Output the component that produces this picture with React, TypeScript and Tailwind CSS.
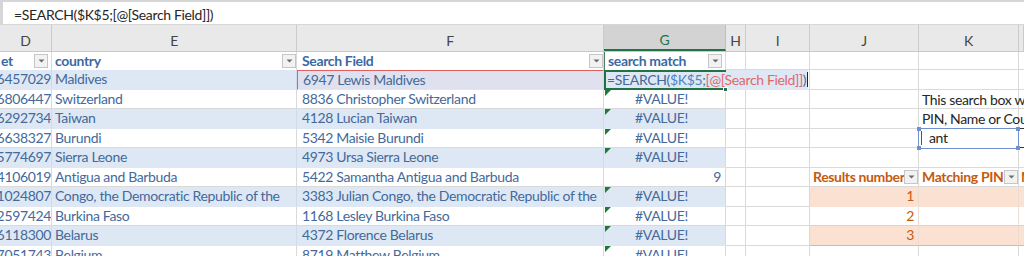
import React from "react";

type Row = { d: string; e: string; f: string; g: string };

const rows: Row[] = [
    { d: "6457029", e: "Maldives", f: "6947 Lewis Maldives", g: "edit" },
    { d: "6806447", e: "Switzerland", f: "8836 Christopher Switzerland", g: "#VALUE!" },
    { d: "6292734", e: "Taiwan", f: "4128 Lucian Taiwan", g: "#VALUE!" },
    { d: "6638327", e: "Burundi", f: "5342 Maisie Burundi", g: "#VALUE!" },
    { d: "5774697", e: "Sierra Leone", f: "4973 Ursa Sierra Leone", g: "#VALUE!" },
    { d: "4106019", e: "Antigua and Barbuda", f: "5422 Samantha Antigua and Barbuda", g: "9" },
    { d: "1024807", e: "Congo, the Democratic Republic of the", f: "3383 Julian Congo, the Democratic Republic of the", g: "#VALUE!" },
    { d: "2597424", e: "Burkina Faso", f: "1168 Lesley Burkina Faso", g: "#VALUE!" },
    { d: "6118300", e: "Belarus", f: "4372 Florence Belarus", g: "#VALUE!" },
    { d: "7051743", e: "Belgium", f: "8719 Matthew Belgium", g: "#VALUE!" },
];

const GRID = "grid grid-cols-[52px_245px_307px_122px_20px_64px_109px_100px_1fr]";

function FilterButton({ offset }: { offset: string }) {
    return (
        <span className={`absolute ${offset} top-[2px] w-[14px] h-[14px] bg-[#f2f2f2] border border-[#c6c6c6] flex items-center justify-center`}>
            <svg width="7" height="4" viewBox="0 0 7 4">
                <path d="M0.5 0.5h6L3.5 3.5z" fill="#6b6b6b" />
            </svg>
        </span>
    );
}

function ErrorMark() {
    return <span className="absolute left-[1px] top-0 w-0 h-0 border-t-[6px] border-r-[6px] border-t-[#1e7a35] border-r-transparent" />;
}

export default function App() {
    const cell = "relative h-[19.5px] border-r border-b overflow-hidden whitespace-nowrap flex items-center";

    return (
        <div className="w-[1024px] h-[256px] overflow-hidden bg-white font-['Lato',sans-serif] text-[14px] tracking-[-0.35px] leading-none">
            {/* formula bar */}
            <div className="h-[25px] bg-[#d6d6d6] pt-[2px] pl-[3px] pb-px">
                <div className="h-[22px] bg-white flex items-center pl-[11px] pt-[3px] text-[#262626]">=SEARCH($K$5;[@[Search Field]])</div>
            </div>

            {/* column letters */}
            <div className={`${GRID} h-[27px] bg-[#e9e9e9] text-[#454545] border-b border-[#c9c9c9]`}>
                {["D", "E", "F"].map((c) => (
                    <div key={c} className="border-r border-[#cbcbcb] flex items-center justify-center pt-[5px]">{c}</div>
                ))}
                <div className="bg-[#d3d3d3] border-r border-[#c0c0c0] border-b-2 border-b-[#217346] flex items-center justify-center pt-[5px] text-[#217346]">G</div>
                {["H", "I", "J", "K", ""].map((c, i) => (
                    <div key={i} className="border-r border-[#cbcbcb] flex items-center justify-center pt-[5px]">{c}</div>
                ))}
            </div>

            {/* table header row */}
            <div className={`${GRID} h-[18px] font-bold text-[#3b6aa2]`}>
                <div className="relative border-r border-[#d9d9d9] overflow-hidden flex items-center pl-[1px]">
                    et
                    <FilterButton offset="right-[3px]" />
                </div>
                <div className="relative border-r border-[#d9d9d9] flex items-center pl-[3px]">
                    country
                    <FilterButton offset="right-0" />
                </div>
                <div className="relative border-r border-[#d9d9d9] flex items-center pl-[5px]">
                    Search Field
                    <FilterButton offset="right-0" />
                </div>
                <div className="relative border-l border-l-[#4f7f5f] border-r border-[#d9d9d9] flex items-center pl-[3px]">
                    search match
                    <FilterButton offset="right-[3px]" />
                </div>
                <div className="border-r border-b border-[#d9d9d9]" />
                <div className="border-r border-b border-[#d9d9d9]" />
                <div className="border-r border-b border-[#d9d9d9]" />
                <div className="border-r border-b border-[#d9d9d9]" />
                <div className="border-b border-[#d9d9d9]" />
            </div>

            {/* data rows */}
            {rows.map((r, i) => {
                const band = i % 2 === 0;
                const tbl = band ? "bg-[#dde8f4] border-b-[#dde8f4] border-r-[#cfdbe9]" : "bg-white border-b-[#dadada] border-r-[#d9d9d9]";
                const plain = "border-b-[#dadada] border-r-[#d9d9d9]";
                let right: React.ReactNode[];
                if (i === 5) {
                    right = [
                        <div key="j" className={`${cell} ${plain} font-bold text-[#c55a11] pl-[3px]`}>
                            Results number
                            <FilterButton offset="right-0" />
                        </div>,
                        <div key="k" className={`${cell} ${plain} font-bold text-[#c55a11] pl-[3px]`}>
                            Matching PIN
                            <FilterButton offset="right-0" />
                        </div>,
                        <div key="l" className={`${cell} border-b-[#dadada] border-r-0 font-bold text-[#c55a11] pl-[2px]`}>Name</div>,
                    ];
                } else if (i >= 6 && i <= 8) {
                    const ob = i === 7 ? "bg-white border-b-[#f8cbad]" : i === 8 ? "bg-[#fbe1d2] border-b-[#f4b183]" : "bg-[#fbe1d2] border-b-[#fbe1d2]";
                    right = [
                        <div key="j" className={`${cell} ${ob} border-r-[#e9dcd4] justify-end pr-[4px] text-[#c55a11]`}>{i - 5}</div>,
                        <div key="k" className={`${cell} ${ob} border-r-[#e9dcd4]`} />,
                        <div key="l" className={`${cell} ${ob} border-r-0`} />,
                    ];
                } else {
                    right = [
                        <div key="j" className={`${cell} ${plain}`} />,
                        <div key="k" className={`${cell} ${plain} overflow-visible text-[#262626] pl-[3px]`}>
                            {i === 1 && <span className="absolute left-[3px] top-[3px]">This search box w</span>}
                            {i === 2 && <span className="absolute left-[3px] top-[3px]">PIN, Name or Cou</span>}
                            {i === 3 && (
                                <div className="absolute -left-[1px] -top-[1px] w-[101px] h-[21px] border border-[#6f8fcf] bg-white z-10 flex items-center">
                                    <span className="ml-[2px] w-px h-[14px] bg-[#555]" />
                                    <span className="ml-[7px]">ant</span>
                                    <span className="absolute -left-[2px] -top-[2px] w-[4px] h-[4px] bg-[#6f8fcf]" />
                                    <span className="absolute -right-[2px] -top-[2px] w-[4px] h-[4px] bg-[#6f8fcf]" />
                                    <span className="absolute -left-[2px] -bottom-[2px] w-[4px] h-[4px] bg-[#6f8fcf]" />
                                    <span className="absolute -right-[2px] -bottom-[2px] w-[4px] h-[4px] bg-[#6f8fcf]" />
                                </div>
                            )}
                        </div>,
                        <div key="l" className={`${cell} border-b-[#dadada] border-r-0 relative overflow-visible`}>
                            {i === 3 && (
                                <>
                                    <span className="absolute left-0 -top-[1px] w-[5px] h-px bg-[#333]" />
                                    <span className="absolute left-0 -bottom-[1px] w-[5px] h-px bg-[#333]" />
                                </>
                            )}
                        </div>,
                    ];
                }

                return (
                    <div key={i} className={`${GRID} text-[#44699b]`}>
                        <div className={`${cell} ${tbl} justify-end pr-0`}>{r.d}</div>
                        <div className={`${cell} ${tbl} pl-[3px]`}>{r.e}</div>
                        <div className={`${cell} ${tbl} pl-[5px] ${i === 0 ? "bg-[#dfe2ee] border border-[#e06060]" : ""}`}>{r.f}</div>
                        {r.g === "edit" ? (
                            <div className={`${cell} ${tbl} overflow-visible z-20`}>
                                <div className="absolute left-0 top-0 w-[204px] h-[19.5px] bg-[#dde8f4] flex items-center pl-[3px]">
                                    <span className="text-[#44699b]">=SEARCH(</span>
                                    <span className="text-[#4a86c8]">$K$5</span>
                                    <span className="text-[#44699b]">;</span>
                                    <span className="text-[#e0676a]">[@[Search Field]]</span>
                                    <span className="text-[#44699b]">)</span>
                                    <span className="ml-px w-px h-[15px] bg-[#222]" />
                                </div>
                                <div className="absolute left-0 top-0 w-[122px] h-[20px] border-t-2 border-b-2 border-l-2 border-[#217346]" />
                                <span className="absolute -right-[3px] -bottom-[3px] w-[5px] h-[5px] bg-[#217346] border border-white" />
                            </div>
                        ) : (
                            <div className={`${cell} ${tbl} ${r.g === "9" ? "justify-end pr-[4px]" : "justify-center pr-[6px]"}`}>
                                {r.g !== "9" && <ErrorMark />}
                                {r.g}
                            </div>
                        )}
                        <div className={`${cell} ${plain}`} />
                        <div className={`${cell} ${plain}`} />
                        {right}
                    </div>
                );
            })}
        </div>
    );
}
